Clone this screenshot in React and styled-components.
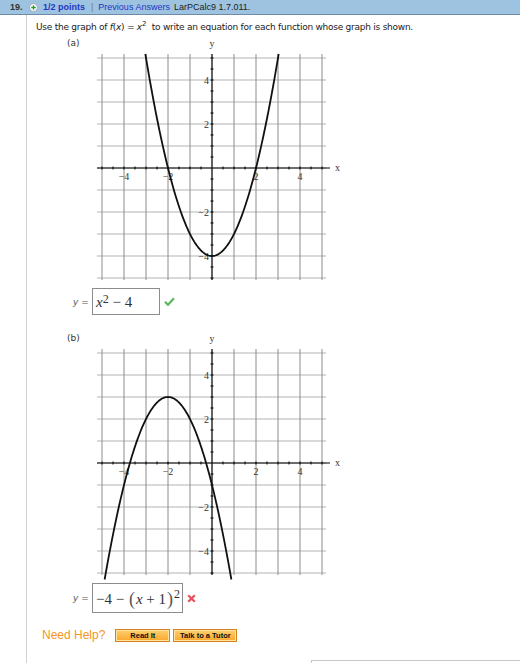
import React from "react"
import styled, { createGlobalStyle } from "styled-components"

const U = 22
const X0 = 120
const Y0 = 131

const GlobalStyle = createGlobalStyle`
  body {
    margin: 0;
    background: #fff;
    font-family: "Liberation Sans", Arial, sans-serif;
  }
`

const ticks = [-5, -4, -3, -2, -1, 0, 1, 2, 3, 4, 5]
const minor = []
for (let i = -10; i <= 10; i++) if (i !== 0) minor.push(i / 2)

const curvePath = (fn, a, b) => {
  let d = ""
  const steps = 120
  for (let i = 0; i <= steps; i++) {
    const x = a + ((b - a) * i) / steps
    const px = X0 + x * U
    const py = Y0 - fn(x) * U
    d += (i === 0 ? "M" : "L") + px.toFixed(2) + " " + py.toFixed(2)
  }
  return d
}

const Graph = ({ fn, from, to }) => (
  <GraphSvg width="250" height="250" viewBox="0 0 250 250">
    {ticks.map(k => (
      <line key={"h" + k} x1="5" x2="234" y1={Y0 + k * U} y2={Y0 + k * U} stroke="#d9d9d9" strokeWidth="2" />
    ))}
    {ticks.map(k => (
      <line key={"v" + k} x1={X0 + k * U} x2={X0 + k * U} y1="17" y2="243" stroke="#8c8c8c" strokeWidth="1" />
    ))}
    <line x1="5" x2="238" y1={Y0} y2={Y0} stroke="#000" strokeWidth="1" />
    <line x1={X0} x2={X0} y1="17" y2="243" stroke="#000" strokeWidth="1" />
    {minor.map(k => (
      <line key={"tx" + k} x1={X0 + k * U} x2={X0 + k * U} y1={Y0 - 1.5} y2={Y0 + 1.5} stroke="#000" strokeWidth="1" />
    ))}
    {minor.map(k => (
      <line key={"ty" + k} x1={X0 - 1.5} x2={X0 + 1.5} y1={Y0 - k * U} y2={Y0 - k * U} stroke="#000" strokeWidth="1" />
    ))}
    {[-4, -2, 2, 4].map(k => (
      <AxisText key={"lx" + k} x={X0 + k * U} y={Y0 + 12} textAnchor="middle">
        {k < 0 ? "\u2212" + -k : k}
      </AxisText>
    ))}
    {[-4, -2, 2, 4].map(k => (
      <AxisText key={"ly" + k} x={X0 - 3} y={Y0 - k * U + 3.5} textAnchor="end">
        {k < 0 ? "\u2212" + -k : k}
      </AxisText>
    ))}
    <AxisText x="243" y={Y0 + 3}>x</AxisText>
    <AxisText x={X0} y="10" textAnchor="middle">y</AxisText>
    <path d={curvePath(fn, from, to)} fill="none" stroke="#111" strokeWidth="1.8" />
  </GraphSvg>
)

const PlusIcon = () => (
  <svg width="9" height="9" viewBox="0 0 9 9">
    <circle cx="4.5" cy="4.5" r="4" fill="#fff" stroke="#8a9aa8" strokeWidth="0.8" />
    <path d="M4.5 2.2v4.6M2.2 4.5h4.6" stroke="#2c9a2c" strokeWidth="1.3" />
  </svg>
)

const CheckIcon = () => (
  <svg width="11" height="9" viewBox="0 0 11 9">
    <path d="M1 4.8l3 3L10 1.2" fill="none" stroke="#5cb85c" strokeWidth="2.2" />
  </svg>
)

const CrossIcon = () => (
  <svg width="9" height="9" viewBox="0 0 9 9">
    <path d="M1.2 1.2l6.6 6.6M7.8 1.2L1.2 7.8" stroke="#e8505b" strokeWidth="2.2" />
  </svg>
)

export default function App() {
  return (
    <>
      <GlobalStyle />
      <Header>
        <Num>19.</Num>
        <PlusIcon />
        <Points>1/2 points</Points>
        <Sep>|</Sep>
        <Prev>Previous Answers</Prev>
        <Ref>LarPCalc9 1.7.011.</Ref>
      </Header>
      <Body>
        <Question>
          Use the graph of <Ital>f</Ital>(<Ital>x</Ital>) = <Ital>x</Ital>
          <Sup>2</Sup> to write an equation for each function whose graph is shown.
        </Question>

        <PartRow>
          <PartLabel>(a)</PartLabel>
          <Graph fn={x => x * x - 4} from={-3.03} to={3.03} />
        </PartRow>
        <AnswerRow>
          <AnswerLabel>
            <Ital>y</Ital> =
          </AnswerLabel>
          <AnswerBox $w={68} $h={27}>
            <MathVar>x</MathVar>
            <MathSup>2</MathSup>
            <span>&nbsp;− 4</span>
          </AnswerBox>
          <CheckIcon />
        </AnswerRow>

        <PartRow $top={17}>
          <PartLabel>(b)</PartLabel>
          <Graph fn={x => -(x + 2) * (x + 2) + 3} from={-4.88} to={0.88} />
        </PartRow>
        <AnswerRow>
          <AnswerLabel>
            <Ital>y</Ital> =
          </AnswerLabel>
          <AnswerBox $w={91} $h={30}>
            <span>−4 −&nbsp;</span>
            <Paren>(</Paren>
            <MathVar>x</MathVar>
            <span>&nbsp;+ 1</span>
            <Paren>)</Paren>
            <MathSup>2</MathSup>
          </AnswerBox>
          <CrossIcon />
        </AnswerRow>

        <HelpRow>
          <HelpText>Need Help?</HelpText>
          <HelpButton $w={55}>Read It</HelpButton>
          <HelpButton $w={64}>Talk to a Tutor</HelpButton>
        </HelpRow>
        <FooterBox />
      </Body>
    </>
  )
}

const Header = styled.div`
  display: flex;
  align-items: center;
  height: 14px;
  padding-left: 10px;
  background: #9ec3e0;
  border-bottom: 1px solid #6f8ca6;
  font-size: 9px;
  color: #333;
  svg {
    margin-left: 5px;
  }
`

const Num = styled.span`
  font-weight: bold;
  width: 14px;
`

const Points = styled.span`
  color: #2436c4;
  font-weight: bold;
  margin-left: 5px;
`

const Sep = styled.span`
  color: #777;
  margin: 0 5px 0 6px;
`

const Prev = styled.span`
  color: #2436c4;
  margin-right: 4px;
`

const Ref = styled.span`
  color: #222;
`

const Body = styled.div`
  margin-left: 26px;
  border-left: 1px solid #d2d2d2;
  padding-left: 9px;
  min-height: 648px;
`

const Question = styled.div`
  padding-top: 7px;
  height: 15px;
  font-family: "DejaVu Sans", Verdana, sans-serif;
  font-size: 9px;
  letter-spacing: -0.25px;
  color: #222;
`

const Ital = styled.i`
  font-style: italic;
`

const Sup = styled.sup`
  font-size: 7px;
  vertical-align: 4px;
  line-height: 0;
  margin-right: 3px;
`

const PartRow = styled.div`
  display: flex;
  align-items: flex-start;
  margin-top: ${p => p.$top || 0}px;
`

const PartLabel = styled.div`
  width: 25px;
  padding-left: 31px;
  padding-top: 1px;
  font-family: "DejaVu Sans", Verdana, sans-serif;
  font-size: 9px;
  color: #333;
`

const GraphSvg = styled.svg`
  display: block;
`

const AxisText = styled.text`
  font-family: "Liberation Serif", "Times New Roman", serif;
  font-size: 10px;
  fill: #333;
`

const AnswerRow = styled.div`
  display: flex;
  align-items: center;
  margin-top: 1px;
  padding-left: 37px;
`

const AnswerLabel = styled.span`
  width: 19px;
  font-family: "DejaVu Sans", Verdana, sans-serif;
  font-size: 9px;
  color: #555;
`

const AnswerBox = styled.span`
  display: flex;
  align-items: center;
  box-sizing: border-box;
  width: ${p => p.$w}px;
  height: ${p => p.$h}px;
  margin-right: 4px;
  padding: 2px 0 0 3px;
  border: 1px solid #8c8c8c;
  font-family: "Liberation Serif", "Times New Roman", serif;
  font-size: 15px;
  color: #333;
  white-space: nowrap;
`

const MathVar = styled.span`
  font-style: italic;
`

const MathSup = styled.span`
  font-size: 12px;
  align-self: flex-start;
  margin-top: 1px;
`

const Paren = styled.span`
  font-size: 18px;
  color: #555;
  margin: 0 1px;
`

const HelpRow = styled.div`
  display: flex;
  align-items: center;
  gap: 3px;
  margin-top: 15px;
  padding-left: 6px;
`

const HelpText = styled.span`
  font-size: 12px;
  color: #f7941d;
  margin-right: 7px;
`

const HelpButton = styled.span`
  display: flex;
  align-items: center;
  justify-content: center;
  box-sizing: border-box;
  width: ${p => p.$w}px;
  height: 13px;
  border: 1px solid #d9801f;
  background: linear-gradient(#ffd071, #f9a72b);
  box-shadow: inset 0 0 0 1px #ffe3a0;
  font-size: 7.5px;
  font-weight: bold;
  color: #111;
`

const FooterBox = styled.div`
  width: 208px;
  height: 10px;
  margin: 18px 0 0 auto;
  border-top: 1px solid #c8c8c8;
  border-left: 1px solid #c8c8c8;
`
